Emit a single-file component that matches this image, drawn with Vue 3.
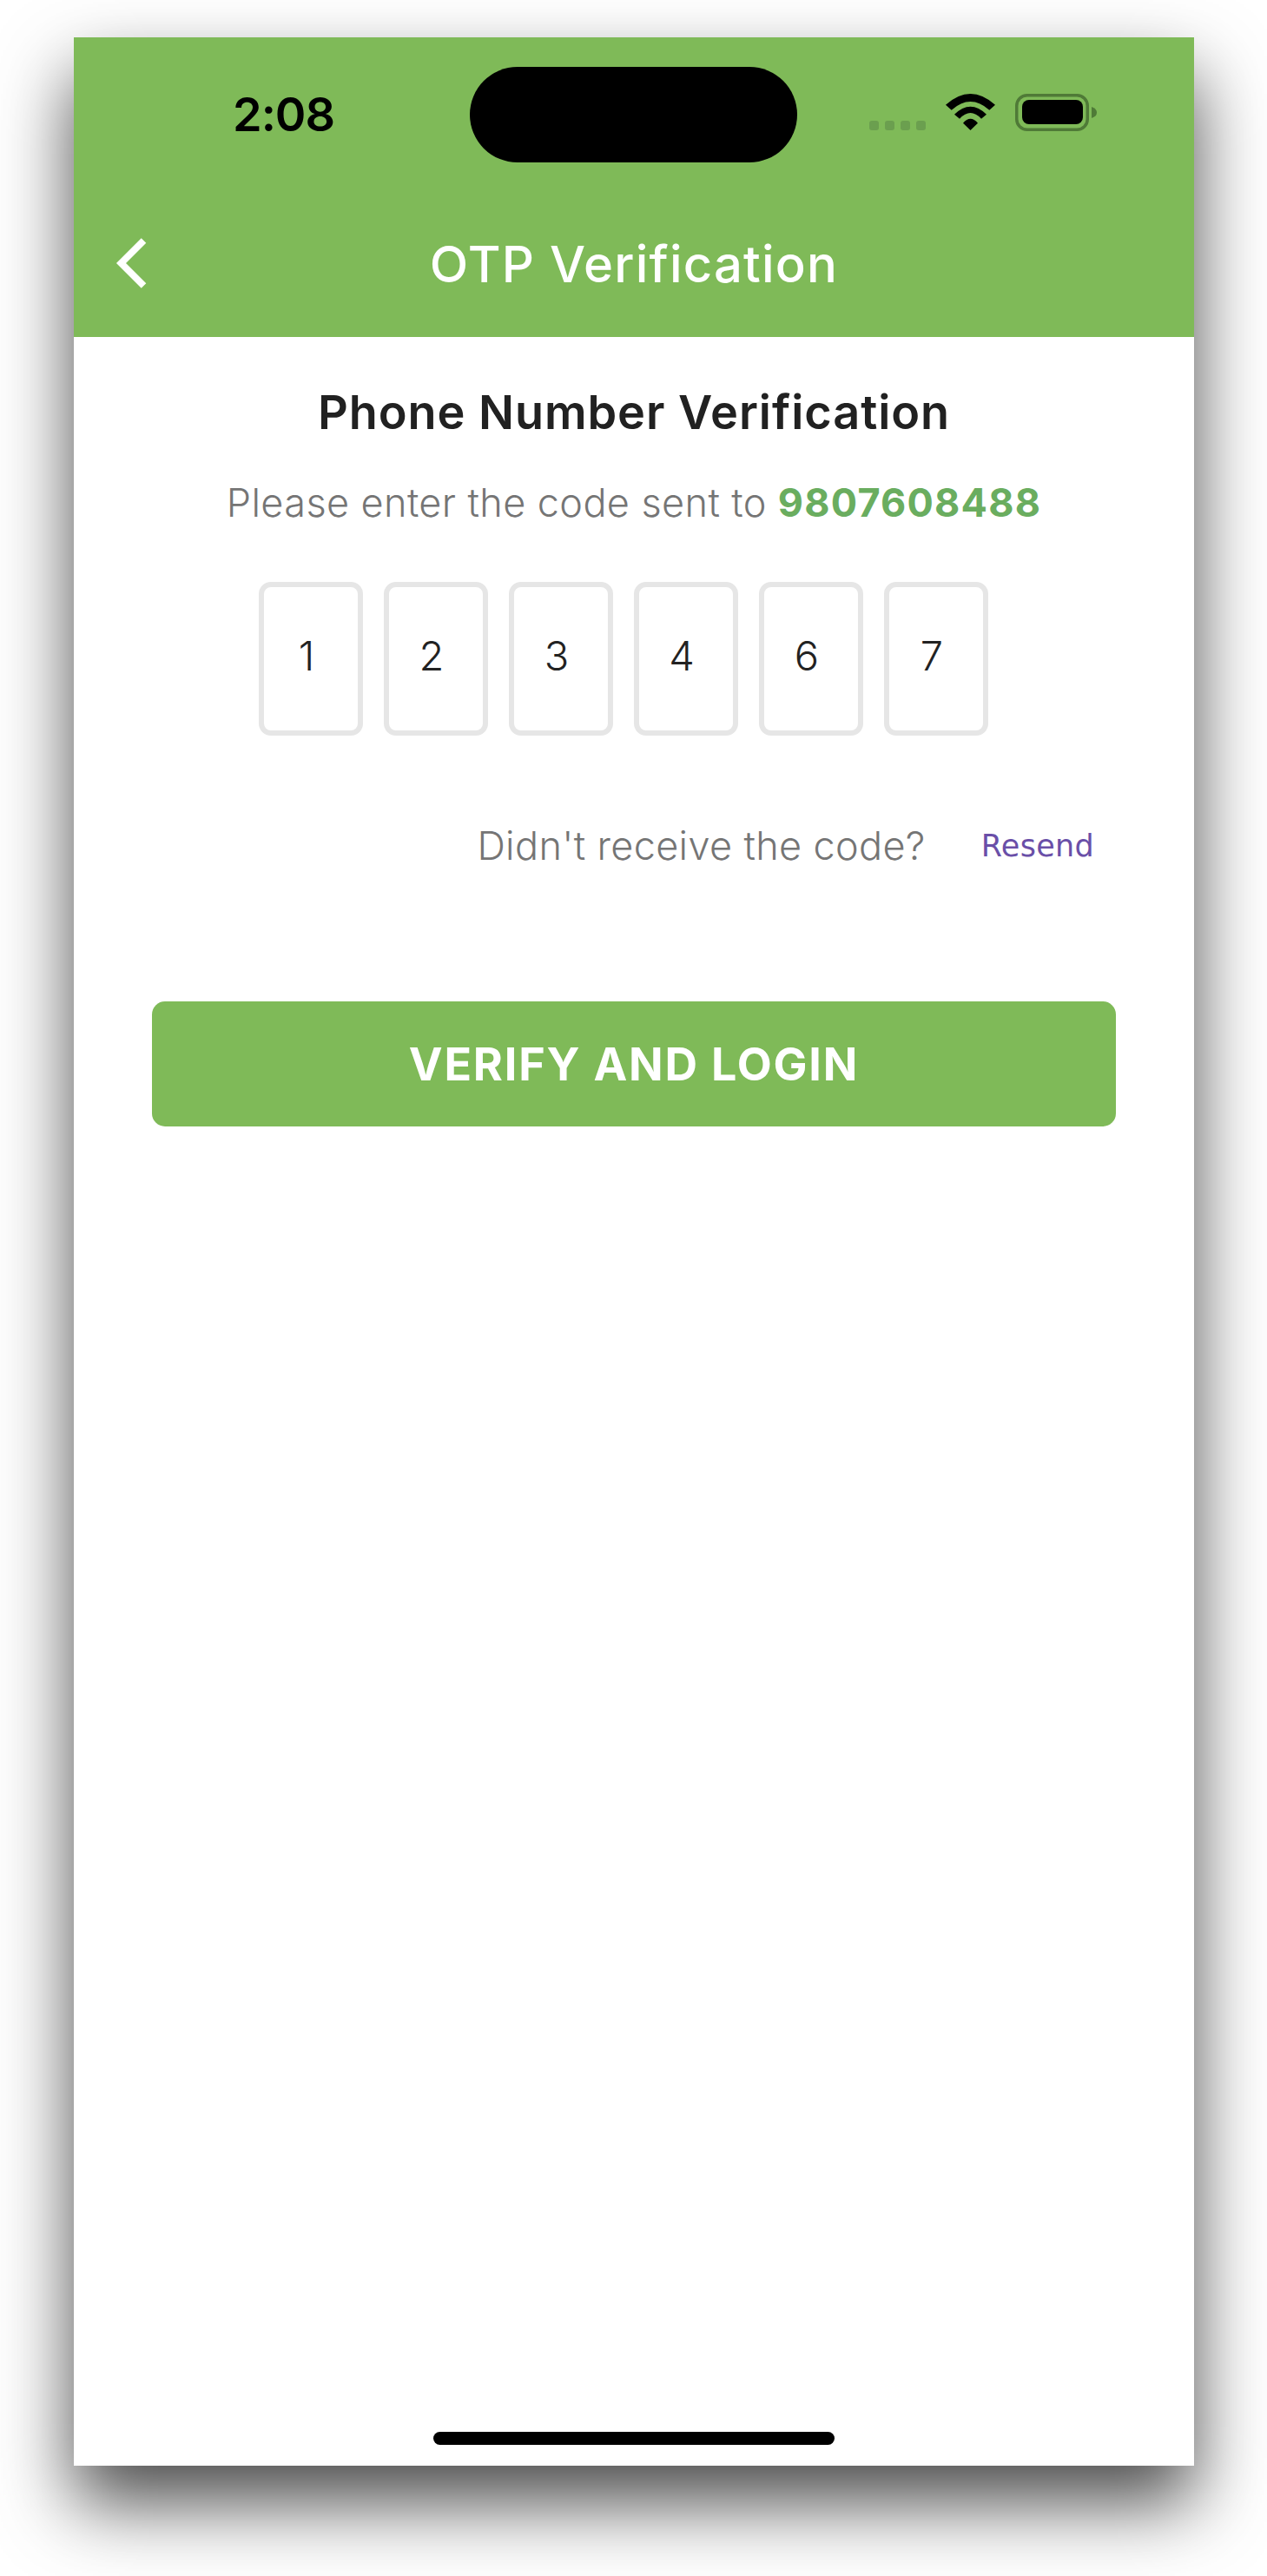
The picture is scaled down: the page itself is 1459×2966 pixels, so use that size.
<template>
  <div class="page">
    <div class="phone">
      <header class="top">
        <div class="status">
          <span class="time">2:08</span>
          <div class="island"></div>
          <svg class="status-icons" width="262" height="43" viewBox="0 0 262 43">
            <rect v-for="x in [0, 18, 36, 54]" :key="x" :x="x" y="31" width="11" height="11" rx="3" fill="#6b9f4f" />
            <path d="M88 12.7Q116.5 -12.7 145 12.7L138.3 18.7Q116.5 -0.7 94.7 18.7Z" />
            <path d="M98 23.7Q116.5 5.7 135 23.7L129 28.7Q116.5 15.3 104 28.7Z" />
            <path d="M108 33.7Q116.5 23.7 125 33.7L116.5 42Z" />
            <rect x="169.75" y="1.75" width="81.5" height="39.5" rx="12" fill="none" stroke="#4f7a37" stroke-width="3.5" />
            <rect x="176" y="7" width="70" height="28" rx="8" />
            <path d="M256 15Q262 17 262 21.5Q262 26 256 28Z" fill="#4f7a37" />
          </svg>
        </div>
        <nav class="nav">
          <svg class="back" width="40" height="64" viewBox="0 0 40 64">
            <path d="M35.5 5L9.5 31L35.5 57" fill="none" stroke="#fff" stroke-width="7.8" />
          </svg>
          <h1 class="title">OTP Verification</h1>
          <span></span>
        </nav>
      </header>

      <main class="content">
        <h2 class="heading">Phone Number Verification</h2>
        <p class="sent">Please enter the code sent to <b class="phone-no">{{ phone }}</b></p>
        <div class="otp">
          <div v-for="(d, i) in code" :key="i" class="box">{{ d }}</div>
        </div>
        <div class="resend-row">
          <span class="hint">Didn't receive the code?</span>
          <a class="resend">Resend</a>
        </div>
        <button class="verify">VERIFY AND LOGIN</button>
      </main>

      <div class="home-bar"></div>
    </div>
  </div>
</template>

<script setup>
const phone = '9807608488'
const code = ['1', '2', '3', '4', '6', '7']
</script>

<style>
html,
body {
  margin: 0;
  background: #fff;
}
</style>

<style scoped>
.page {
  width: 1459px;
  height: 2966px;
  padding: 43px 84px 127px 85px;
  box-sizing: border-box;
  overflow: hidden;
  font-family: Inter, "Liberation Sans", sans-serif;
}

.phone {
  height: 2796px;
  background: #fff;
  display: flex;
  flex-direction: column;
  box-shadow: 0 43px 80px rgba(0, 0, 0, 0.7);
}

.top {
  background: #7fba58;
  height: 345px;
}

.status {
  display: flex;
  align-items: flex-start;
  padding: 34px 0 0 183px;
  height: 110px;
}

.time {
  width: 273px;
  margin-top: 25px;
  font-size: 54px;
  line-height: 60px;
  font-weight: 600;
  letter-spacing: -1px;
  color: #000;
}

.island {
  width: 377px;
  height: 110px;
  border-radius: 55px;
  background: #000;
}

.status-icons {
  margin: 31px 0 0 83px;
}

.nav {
  display: grid;
  grid-template-columns: 1fr auto 1fr;
  align-items: center;
  height: 168px;
  padding: 33px 0 0 0;
}

.back {
  margin-left: 45px;
}

.title {
  margin: 0;
  font-size: 58px;
  line-height: 70px;
  font-weight: 500;
  letter-spacing: 1.2px;
  color: #fff;
}

.content {
  display: flex;
  flex-direction: column;
  align-items: center;
}

.heading {
  margin: 57px 0 0;
  font-size: 54px;
  line-height: 60px;
  font-weight: 600;
  letter-spacing: 0.95px;
  color: #212121;
}

.sent {
  margin: 44px 0 0;
  font-size: 45px;
  line-height: 60px;
  font-weight: 350;
  letter-spacing: 0.4px;
  color: #757575;
}

.phone-no {
  font-weight: 700;
  letter-spacing: 1.2px;
  color: #6aad5f;
}

.otp {
  display: flex;
  gap: 24px;
  margin: 61px 24px 0 0;
}

.box {
  width: 120px;
  height: 177px;
  box-sizing: border-box;
  border: 6px solid #e6e6e6;
  border-radius: 14px;
  display: flex;
  align-items: center;
  justify-content: center;
  padding: 0 10px 8px 0;
  font-size: 47px;
  font-weight: 350;
  color: #222;
}

.resend-row {
  align-self: stretch;
  display: flex;
  justify-content: flex-end;
  align-items: center;
  gap: 64px;
  margin-top: 96px;
  padding-right: 115px;
  height: 60px;
}

.hint {
  font-size: 45px;
  font-weight: 350;
  letter-spacing: 0.35px;
  color: #757575;
}

.resend {
  margin-top: 2px;
  font-family: "DejaVu Sans", sans-serif;
  font-size: 35px;
  letter-spacing: 0.3px;
  color: #6a4fa8;
}

.verify {
  align-self: stretch;
  margin: 150px 90px 0;
  height: 144px;
  padding-top: 2px;
  border: 0;
  border-radius: 15px;
  background: #7fba58;
  font-family: inherit;
  font-size: 52px;
  font-weight: 700;
  letter-spacing: 1.8px;
  color: #fff;
}

.home-bar {
  width: 462px;
  height: 15px;
  margin: auto auto 24px;
  border-radius: 8px;
  background: #000;
}
</style>
